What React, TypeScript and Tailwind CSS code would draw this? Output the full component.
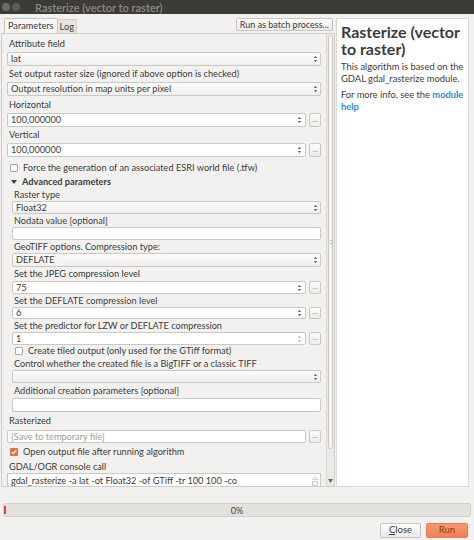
import React from "react"

const Arrows = ({ dim = false }: { dim?: boolean }) => (
  <svg width="5" height="8" viewBox="0 0 5 8" className="shrink-0">
    <path d="M0.8 3 L2.5 0.8 L4.2 3 Z" fill={dim ? "#bdbbb7" : "#6a6864"} />
    <path d="M0.8 5 L2.5 7.2 L4.2 5 Z" fill={dim ? "#bdbbb7" : "#6a6864"} />
  </svg>
)

function Label({ children, indent = false, h }: { children: React.ReactNode; indent?: boolean; h: string }) {
  return (
    <div className={`${h} shrink-0 flex items-center text-[9.2px] leading-none text-[#3c3c3c] whitespace-nowrap ${indent ? "pl-[12px]" : "pl-[7px]"}`}>
      {children}
    </div>
  )
}

function Select({ value, indent = false, h }: { value?: string; indent?: boolean; h: string }) {
  return (
    <div className={`${indent ? "ml-[10px]" : "ml-[5px]"} mr-[5px] ${h} shrink-0 flex items-center justify-between border border-[#cbc8c3] rounded-[2px] bg-gradient-to-b from-[#fcfcfb] to-[#f0efed] pl-[3px] pr-[2px] text-[9.2px] leading-none text-[#3c3c3c]`}>
      <span>{value}</span>
      <Arrows />
    </div>
  )
}

function TextInput({ value, placeholder = false }: { value?: string; placeholder?: boolean }) {
  return (
    <div className={`flex-1 h-full flex items-center border border-[#cbc8c3] rounded-[2px] bg-white pl-[3px] text-[9.2px] leading-none ${placeholder ? "text-[#a09e9a]" : "text-[#3c3c3c]"}`}>
      {value}
    </div>
  )
}

function DotsButton() {
  return (
    <div className="w-[12px] h-full shrink-0 flex items-end justify-center pb-[3px] border border-[#cbc8c3] rounded-[2px] bg-gradient-to-b from-[#fcfcfb] to-[#ecebe9] text-[7px] leading-none text-[#8a8884]">
      ...
    </div>
  )
}

function Spin({ value, indent = false, dim = false, h }: { value: string; indent?: boolean; dim?: boolean; h: string }) {
  return (
    <div className={`${indent ? "ml-[10px]" : "ml-[5px]"} mr-[5px] ${h} shrink-0 flex items-center gap-[3px]`}>
      <div className="flex-1 h-full flex items-center justify-between border border-[#cbc8c3] rounded-[2px] bg-white pl-[3px] pr-[3px] text-[9.2px] leading-none text-[#3c3c3c]">
        <span>{value}</span>
        <Arrows dim={dim} />
      </div>
      <DotsButton />
    </div>
  )
}

function Check({ children, checked = false, indent = false, h }: { children: React.ReactNode; checked?: boolean; indent?: boolean; h: string }) {
  return (
    <div className={`${h} shrink-0 flex items-center gap-[5px] text-[9.2px] leading-none text-[#3c3c3c] whitespace-nowrap ${indent ? "pl-[13px]" : "pl-[8px]"}`}>
      {checked ? (
        <div className="w-[8px] h-[8px] rounded-[1px] bg-[#e4703f] flex items-center justify-center">
          <svg width="6" height="6" viewBox="0 0 6 6">
            <path d="M0.8 3 L2.4 4.6 L5.3 1.2" stroke="white" strokeWidth="1.3" fill="none" />
          </svg>
        </div>
      ) : (
        <div className="w-[8px] h-[8px] rounded-[1px] border border-[#aaa7a2] bg-white" />
      )}
      <span>{children}</span>
    </div>
  )
}

export default function App() {
  return (
    <div className="w-[474px] h-[540px] overflow-hidden bg-[#f2f1f0] font-['Lato','Open_Sans',sans-serif] flex flex-col">
      {/* title bar */}
      <div className="h-[14px] shrink-0 bg-[#3c3b37] flex items-center gap-[2px] pl-[2px]">
        <div className="w-[8px] h-[8px] rounded-full bg-[#6e6c66]" />
        <div className="w-[8px] h-[8px] rounded-full bg-[#5e5c57]" />
        <span className="ml-[13px] text-[11px] leading-none text-[#8d8a84] font-semibold">Rasterize (vector to raster)</span>
      </div>

      <div className="flex flex-1 min-h-0">
        {/* left side */}
        <div className="w-[335px] shrink-0 flex flex-col pl-[1px]">
          <div className="h-[19px] shrink-0 flex items-end justify-between">
            <div className="flex items-end h-full pl-[3px]">
              <div className="h-[15px] px-[3px] flex items-center border border-b-0 border-[#c9c6c1] rounded-t-[2px] bg-[#f7f6f5] text-[9.2px] leading-none text-[#3c3c3c]">Parameters</div>
              <div className="h-[14px] px-[2px] flex items-center border border-b-0 border-l-0 border-[#d3d0cb] bg-[#e6e4e1] text-[9.2px] leading-none text-[#3c3c3c]">Log</div>
            </div>
            <div className="h-[13px] mb-[2px] mr-[2px] px-[3px] flex items-center border border-[#c9c6c1] rounded-[2px] bg-gradient-to-b from-[#fcfcfb] to-[#ecebe9] text-[9px] leading-none text-[#3c3c3c]">Run as batch process...</div>
          </div>

          <div className="h-[454px] shrink-0 flex border border-[#d0cdc8] bg-[#f2f1f0]">
            <div className="flex-1 min-w-0 flex flex-col pt-[2px] overflow-hidden">
              <Label h="h-[16px]">Attribute field</Label>
              <Select value="lat" h="h-[14px]" />
              <Label h="h-[16px]">Set output raster size (ignored if above option is checked)</Label>
              <Select value="Output resolution in map units per pixel" h="h-[14px]" />
              <Label h="h-[17px]">Horizontal</Label>
              <Spin value="100,000000" h="h-[14px]" />
              <Label h="h-[16px]">Vertical</Label>
              <Spin value="100,000000" h="h-[14px]" />
              <div className="h-[4px] shrink-0" />
              <Check h="h-[14px]">Force the generation of an associated ESRI world file (.tfw)</Check>
              <div className="h-[14px] shrink-0 flex items-center gap-[5px] pl-[9px] text-[9.2px] leading-none font-bold text-[#3c3c3c]">
                <svg width="6" height="4" viewBox="0 0 6 4">
                  <path d="M0 0 L6 0 L3 4 Z" fill="#3c3c3c" />
                </svg>
                Advanced parameters
              </div>
              <Label indent h="h-[12px]">Raster type</Label>
              <Select indent value="Float32" h="h-[13px]" />
              <Label indent h="h-[13px]">Nodata value [optional]</Label>
              <div className="ml-[10px] mr-[5px] h-[13px] shrink-0 flex"><TextInput /></div>
              <Label indent h="h-[13px]">GeoTIFF options. Compression type:</Label>
              <Select indent value="DEFLATE" h="h-[14px]" />
              <Label indent h="h-[14px]">Set the JPEG compression level</Label>
              <Spin indent value="75" h="h-[13px]" />
              <Label indent h="h-[13px]">Set the DEFLATE compression level</Label>
              <Spin indent value="6" h="h-[12px]" />
              <Label indent h="h-[13px]">Set the predictor for LZW or DEFLATE compression</Label>
              <Spin indent dim value="1" h="h-[13px]" />
              <Check indent h="h-[12px]">Create tiled output (only used for the GTiff format)</Check>
              <Label indent h="h-[13px]">Control whether the created file is a BigTIFF or a classic TIFF</Label>
              <Select indent h="h-[13px]" />
              <Label indent h="h-[15px]">Additional creation parameters [optional]</Label>
              <div className="ml-[10px] mr-[5px] h-[14px] shrink-0 flex"><TextInput /></div>
              <Label h="h-[18px]">Rasterized</Label>
              <div className="ml-[5px] mr-[5px] h-[13px] shrink-0 flex gap-[3px]">
                <TextInput placeholder value="[Save to temporary file]" />
                <DotsButton />
              </div>
              <Check checked h="h-[18px]">Open output file after running algorithm</Check>
              <Label h="h-[12px]">GDAL/OGR console call</Label>
              <div className="ml-[5px] mr-[5px] h-[16px] shrink-0 flex items-start justify-between border border-[#cbc8c3] bg-white pl-[3px] pr-[2px] pt-[2px] text-[9.2px] leading-none text-[#3c3c3c] overflow-hidden">
                <span className="whitespace-nowrap">gdal_rasterize -a lat -ot Float32 -of GTiff -tr 100 100 -co</span>
                <svg width="6" height="10" viewBox="0 0 6 10" className="shrink-0">
                  <path d="M0.5 3.5 L3 0.5 L5.5 3.5 Z" fill="none" stroke="#c5c3bf" strokeWidth="0.8" />
                  <rect x="0.5" y="5.5" width="5" height="4" fill="none" stroke="#c5c3bf" strokeWidth="0.8" />
                </svg>
              </div>
            </div>
            {/* scrollbar */}
            <div className="w-[8px] shrink-0 flex flex-col border-l border-[#dcd9d4] bg-[#ebe9e7]">
              <div className="h-[414px] mt-[1px] mx-[1px] rounded-[3px] border border-[#cbc8c3] bg-[#f5f4f2] flex items-center justify-center">
                <div className="w-[2px] h-[4px] border-y border-[#c2bfba]" />
              </div>
              <div className="flex-1" />
              <div className="h-[10px] flex items-center justify-center">
                <svg width="5" height="4" viewBox="0 0 5 4">
                  <path d="M0 0 L5 0 L2.5 4 Z" fill="#6a6864" />
                </svg>
              </div>
            </div>
          </div>
        </div>

        {/* right help panel */}
        <div className="w-[133px] h-[469px] shrink-0 mt-[4px] ml-[1px] bg-white border border-[#dcd9d4] pl-[4px] pt-[4px]">
          <div className="text-[16px] leading-[17px] font-bold text-[#3c3c3c]">Rasterize (vector to raster)</div>
          <p className="mt-[4px] text-[9.4px] leading-[12px] text-[#3c3c3c]">This algorithm is based on the GDAL gdal_rasterize module.</p>
          <p className="mt-[4px] -mr-[2px] text-[9.3px] leading-[12px] text-[#3c3c3c]">
            For more info, see the <span className="font-bold text-[#2a8bd5]">module</span>
            <br />
            <span className="font-bold text-[#2a8bd5]">help</span>
          </p>
        </div>
      </div>

      {/* progress */}
      <div className="mx-[3px] mt-[15px] h-[14px] shrink-0 rounded-[3px] border border-[#d3d0cb] bg-[#e3e1de] relative flex items-center justify-center text-[9px] leading-none text-[#3c3c3c]">
        <div className="absolute left-[0px] top-[2px] w-[2px] h-[8px] bg-[#d9473a]" />
        0%
      </div>

      <div className="h-[23px] shrink-0 flex items-center justify-end gap-[5px] pr-[6px] pt-[3px]">
        <div className="w-[41px] h-[15px] flex items-center justify-center rounded-[2px] border border-[#c9c6c1] bg-gradient-to-b from-[#fcfcfb] to-[#ecebe9] text-[9.5px] leading-none text-[#3c3c3c]">
          <span><span className="underline">C</span>lose</span>
        </div>
        <div className="w-[42px] h-[15px] flex items-center justify-center rounded-[2px] border border-[#ec7a50] bg-gradient-to-b from-[#f7996f] to-[#ef8056] text-[9.5px] leading-none text-[#8a3a17]">Run</div>
      </div>
    </div>
  )
}
